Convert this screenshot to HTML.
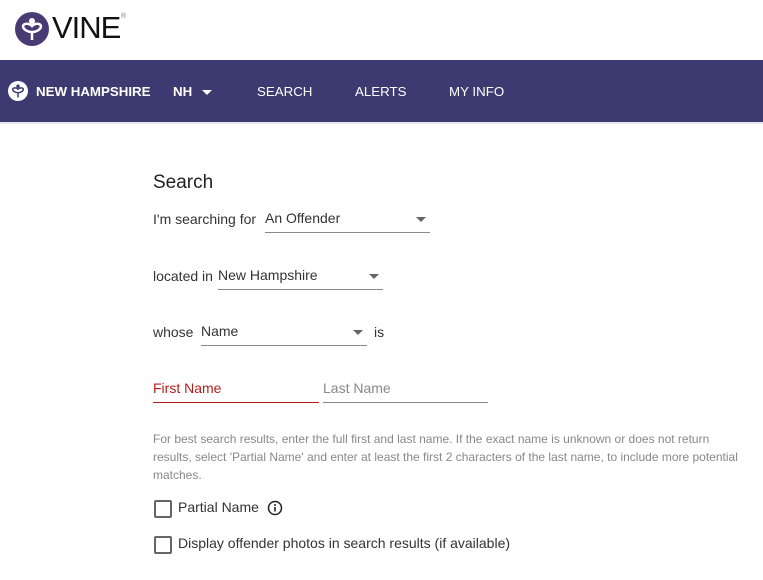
<!DOCTYPE html><html><head><style>
body{margin:0;width:763px;height:580px;background:#fff;font-family:"Liberation Sans",sans-serif;position:relative;overflow:hidden;color:#333}
.a{position:absolute}
.nav{top:60px;left:0;width:763px;height:64px;background:#3c3a71;border-bottom:2px solid #e4e4ea;box-sizing:border-box}
.n{position:absolute;top:84px;color:#fff;font-size:13.3px;font-weight:bold}
.l{font-size:14px;color:#333}
.u{border-bottom:1px solid #888;height:22px;padding-top:2px;font-size:14px;color:#333}
.car{position:absolute;right:4px;top:9px;width:0;height:0;border-left:5px solid transparent;border-right:5px solid transparent;border-top:5px solid #666}
.cb{width:14px;height:14px;border:2px solid #666;border-radius:2px}
</style></head><body>
<svg class="a" style="left:15px;top:12px" width="34" height="34" viewBox="0 0 34 34"><circle cx="17" cy="17" r="17" fill="#4a3a74"/><circle cx="17" cy="9" r="3" fill="#fff"/><path d="M17 14c-3-3-8-3-9 0 0 3 4 6 9 6 5 0 9-3 9-6-1-3-6-3-9 0zM17 20v8" stroke="#fff" stroke-width="2.5" fill="none"/></svg>
<div class="a" style="left:52px;top:10px;font-size:31px;color:#111;letter-spacing:-1px">VINE</div>
<div class="a" style="left:121px;top:13px;font-size:7px;color:#777">®</div>
<div class="a nav"></div>
<svg class="a" style="left:8px;top:81px" width="20" height="20" viewBox="0 0 34 34"><circle cx="17" cy="17" r="17" fill="#fff"/><circle cx="17" cy="9" r="3" fill="#3c3a71"/><path d="M17 14c-3-3-8-3-9 0 0 3 4 6 9 6 5 0 9-3 9-6-1-3-6-3-9 0zM17 20v8" stroke="#3c3a71" stroke-width="2.5" fill="none"/></svg>
<div class="n" style="left:36px">NEW HAMPSHIRE</div>
<div class="n" style="left:173px">NH</div>
<div class="a" style="left:202px;top:90px;border-left:5px solid transparent;border-right:5px solid transparent;border-top:5px solid #fff"></div>
<div class="n" style="left:257px;font-weight:normal">SEARCH</div>
<div class="n" style="left:355px;font-weight:normal">ALERTS</div>
<div class="n" style="left:449px;font-weight:normal">MY INFO</div>
<div class="a" style="left:153px;top:172px;font-size:19px;color:#222">Search</div>
<div class="a l" style="left:153px;top:211px">I'm searching for</div>
<div class="a u" style="left:265px;top:208px;width:165px">An Offender<div class="car"></div></div>
<div class="a l" style="left:153px;top:268px">located in</div>
<div class="a u" style="left:218px;top:265px;width:165px">New Hampshire<div class="car"></div></div>
<div class="a l" style="left:153px;top:324px">whose</div>
<div class="a u" style="left:201px;top:321px;width:166px">Name<div class="car"></div></div>
<div class="a l" style="left:374px;top:324px">is</div>
<div class="a u" style="left:153px;top:378px;width:166px;color:#b71c1c;border-bottom:1px solid #b71c1c">First Name</div>
<div class="a u" style="left:323px;top:378px;width:165px;color:#888">Last Name</div>
<div class="a" style="left:153px;top:430px;width:595px;font-size:12px;line-height:18px;color:#888">For best search results, enter the full first and last name. If the exact name is unknown or does not return results, select 'Partial Name' and enter at least the first 2 characters of the last name, to include more potential matches.</div>
<div class="a cb" style="left:154px;top:500px"></div>
<div class="a l" style="left:178px;top:499px">Partial Name</div>
<svg class="a" style="left:267px;top:500px" width="16" height="16" viewBox="0 0 16 16"><circle cx="8" cy="8" r="6.5" stroke="#222" stroke-width="1.5" fill="none"/><rect x="7.2" y="7" width="1.6" height="4.5" fill="#222"/><circle cx="8" cy="5" r="1" fill="#222"/></svg>
<div class="a cb" style="left:154px;top:536px"></div>
<div class="a l" style="left:178px;top:535px">Display offender photos in search results (if available)</div>
</body></html>
